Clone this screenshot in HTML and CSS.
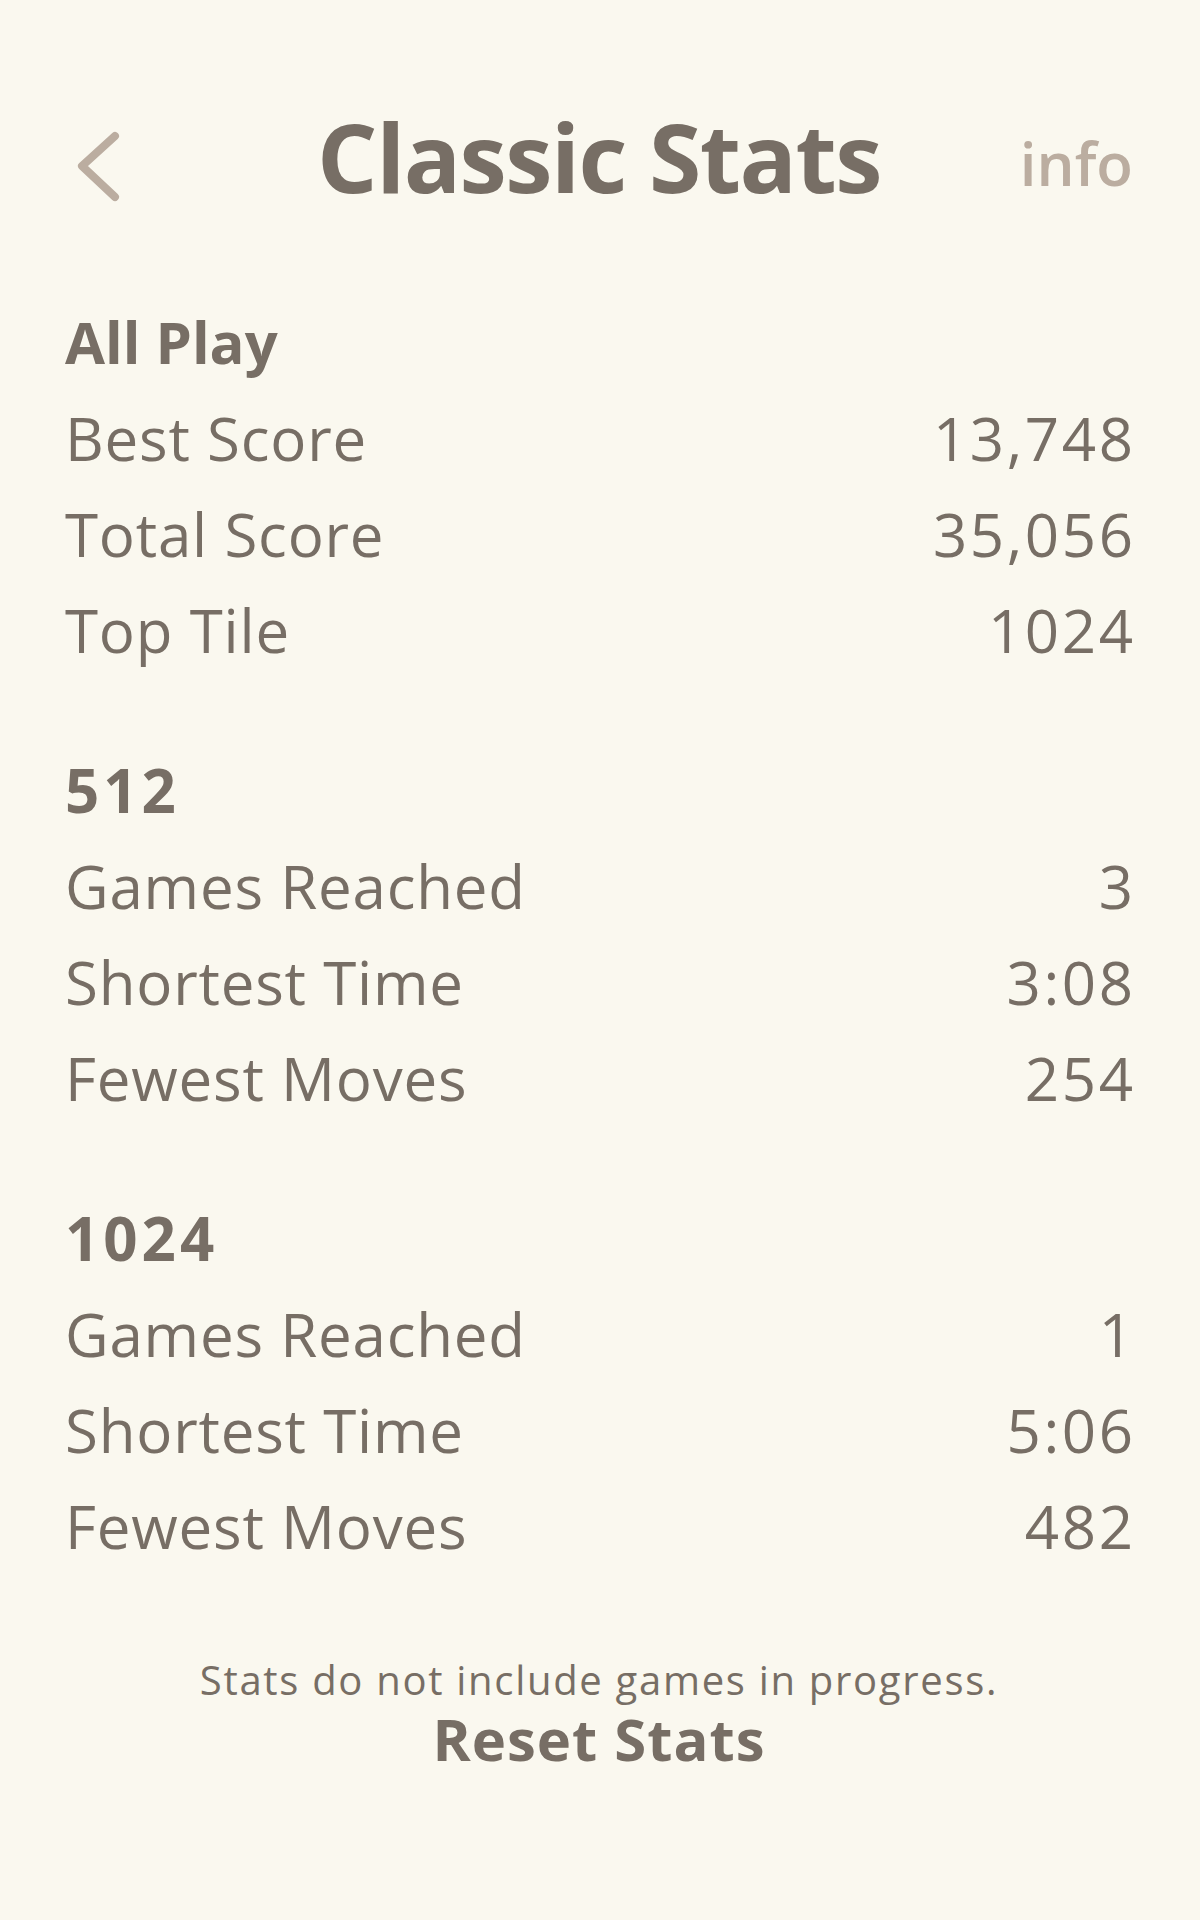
FILE: index.html
```html
<!DOCTYPE html>
<html lang="en">
<head>
	<meta charset="utf-8" />
	<title>Classic Stats</title>
	<link rel="stylesheet" href="styles.css">
</head>
<body>
	<div class="page">
		<div class="header">
			<svg class="back" width="48" height="76" viewBox="0 0 48 76">
				<polyline points="41,8 8,38 41,69" />
			</svg>
			<h1 class="title">Classic Stats</h1>
			<span class="info">info</span>
		</div>

		<div class="section first">
			<div class="heading">All Play</div>
			<div class="row"><span>Best Score</span><span class="value">13,748</span></div>
			<div class="row"><span>Total Score</span><span class="value">35,056</span></div>
			<div class="row"><span>Top Tile</span><span class="value">1024</span></div>
		</div>

		<div class="section">
			<div class="heading number">512</div>
			<div class="row"><span>Games Reached</span><span class="value">3</span></div>
			<div class="row"><span>Shortest Time</span><span class="value">3:08</span></div>
			<div class="row"><span>Fewest Moves</span><span class="value">254</span></div>
		</div>

		<div class="section">
			<div class="heading number">1024</div>
			<div class="row"><span>Games Reached</span><span class="value">1</span></div>
			<div class="row"><span>Shortest Time</span><span class="value">5:06</span></div>
			<div class="row"><span>Fewest Moves</span><span class="value">482</span></div>
		</div>

		<div class="footer">
			<div class="note">Stats do not include games in progress.</div>
			<div class="reset">Reset Stats</div>
		</div>
	</div>
</body>
</html>
```

FILE: styles.css
```css
body
{
	margin: 0;
	background-color: #FAF8EF;
	color: #776E65;
	font-family: "Open Sans", sans-serif;
}

.page
{
	padding: 109px 67px 0 65px;
}

.header
{
	display: grid;
	grid-template-columns: 1fr auto 1fr;
	align-items: center;
	height: 95px;
}

	.header .back
	{
		margin: 19px 0 0 9px;
	}

	.header .back polyline
	{
		fill: none;
		stroke: #BBADA0;
		stroke-width: 8;
		stroke-linecap: round;
		stroke-linejoin: round;
	}

	.header .title
	{
		margin: 0;
		font-size: 95px;
		line-height: 95px;
		font-weight: 700;
		letter-spacing: -1.5px;
	}

	.header .info
	{
		justify-self: end;
		font-size: 60px;
		font-weight: 600;
		color: #BBADA0;
		margin-top: 12px;
	}

.section
{
	margin-top: 64px;
}

	.section.first
	{
		margin-top: 90px;
	}

	.section .heading
	{
		font-size: 58px;
		line-height: 96px;
		font-weight: 700;
	}

	.section .heading.number
	{
		font-size: 60px;
		letter-spacing: 4px;
	}

	.section .row
	{
		display: flex;
		justify-content: space-between;
		font-size: 60px;
		line-height: 96px;
		letter-spacing: 0.8px;
	}

	.section .row .value
	{
		letter-spacing: 2.6px;
		margin-right: -2.6px;
	}

.footer
{
	margin-top: 78px;
	text-align: center;
}

	.footer .note
	{
		font-size: 40px;
		line-height: 56px;
		letter-spacing: 1.7px;
	}

	.footer .reset
	{
		font-size: 58px;
		line-height: 62px;
		font-weight: 700;
		letter-spacing: 1px;
	}
```
